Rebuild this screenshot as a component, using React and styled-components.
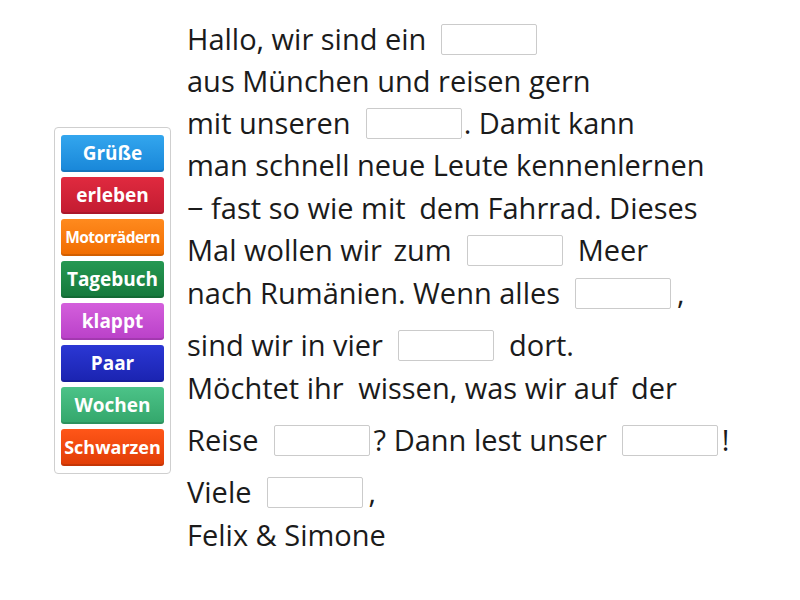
import React from "react";
import styled, { createGlobalStyle } from "styled-components";

const GlobalStyle = createGlobalStyle`
  html, body {
    margin: 0;
    padding: 0;
    background: #fff;
  }
  body {
    font-family: "Open Sans", "Noto Sans", sans-serif;
  }
`;

const Page = styled.div`
  width: 800px;
  height: 600px;
  display: flex;
  align-items: flex-start;
`;

const Bank = styled.div`
  align-self: center;
  margin-left: 54px;
  width: 117px;
  box-sizing: border-box;
  padding: 7px 6px;
  border: 1px solid #cfcfcf;
  border-radius: 4px;
  display: flex;
  flex-direction: column;
  gap: 5px;
`;

const Word = styled.div`
  height: 37px;
  border-radius: 3px;
  display: flex;
  align-items: center;
  justify-content: center;
  color: #fff;
  font-weight: 700;
  font-size: ${({ $size }) => $size || 19}px;
  letter-spacing: ${({ $tight }) => ($tight ? "-0.5px" : "0")};
  white-space: nowrap;
  overflow: hidden;
  background: linear-gradient(${({ $top }) => $top}, ${({ $bottom }) => $bottom});
  box-shadow: inset 0 -2px 0 rgba(0, 0, 0, 0.12);
`;

const Story = styled.div`
  margin-left: 16px;
  padding-top: 18px;
  display: flex;
  flex-direction: column;
  color: #1b1b1b;
  font-size: 29px;
`;

const Line = styled.div`
  height: 42px;
  line-height: 42px;
  margin-top: ${({ $extra }) => $extra || 0}px;
  display: flex;
  align-items: center;
  white-space: pre;
`;

const Space = styled.span`
  display: inline-block;
  width: ${({ $w }) => $w}px;
`;

const Blank = styled.span`
  display: inline-block;
  width: 96px;
  height: 31px;
  box-sizing: border-box;
  border: 1px solid #cbcbcb;
  border-radius: 2px;
  background: #fff;
  margin-left: 15px;
  margin-right: ${({ $after }) => $after ?? 15}px;
`;

const words = [
  { label: "Grüße", top: "#33a6ee", bottom: "#1886d8" },
  { label: "erleben", top: "#e02a3f", bottom: "#c21b31" },
  { label: "Motorrädern", top: "#ff8a1e", bottom: "#f06c00", size: 15.5, tight: true },
  { label: "Tagebuch", top: "#259852", bottom: "#16783c" },
  { label: "klappt", top: "#d45fdc", bottom: "#b940c8" },
  { label: "Paar", top: "#2b37d4", bottom: "#1a23b0" },
  { label: "Wochen", top: "#4cc388", bottom: "#33a66b" },
  { label: "Schwarzen", top: "#ff5618", bottom: "#e03c06", size: 18 },
];

export default function App() {
  return (
    <Page>
      <GlobalStyle />
      <Bank>
        {words.map((w) => (
          <Word
            key={w.label}
            $top={w.top}
            $bottom={w.bottom}
            $size={w.size}
            $tight={w.tight}
          >
            {w.label}
          </Word>
        ))}
      </Bank>
      <Story>
        <Line>
          Hallo, wir sind ein<Blank />
        </Line>
        <Line>aus München und reisen gern</Line>
        <Line>
          mit unseren<Blank $after={2} />. Damit kann
        </Line>
        <Line>man schnell neue Leute kennenlernen</Line>
        <Line $extra={1}>
          − fast so wie mit<Space $w={6} /> dem Fahrrad. Dieses
        </Line>
        <Line>
          Mal wollen wir<Space $w={4} /> zum<Blank />Meer
        </Line>
        <Line $extra={1}>
          nach Rumänien. Wenn alles<Blank $after={6} />,
        </Line>
        <Line $extra={10}>
          sind wir in vier<Blank />dort.
        </Line>
        <Line $extra={1}>
          Möchtet ihr<Space $w={7} /> wissen, was wir auf<Space $w={6} /> der
        </Line>
        <Line $extra={10}>
          Reise<Blank $after={4} />? Dann lest unser<Blank $after={4} />!
        </Line>
        <Line $extra={10}>
          Viele<Blank $after={6} />,
        </Line>
        <Line $extra={1}>Felix &amp; Simone</Line>
      </Story>
    </Page>
  );
}
